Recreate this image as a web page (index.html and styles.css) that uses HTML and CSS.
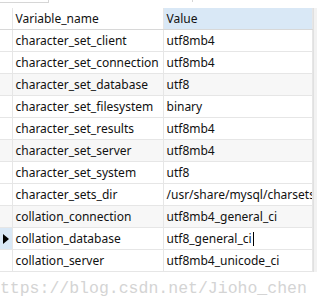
FILE: index.html
```html
<!DOCTYPE html>
<html lang="en">
<head>
  <meta charset="UTF-8">
  <title>Variables</title>
  <link rel="stylesheet" href="styles.css">
</head>
<body>
  <div class="tabs">
    <span class="tab"></span>
    <span class="tab tab-wide"></span>
  </div>
  <div class="grid-wrap">
    <table class="grid">
      <colgroup>
        <col class="col-mark">
        <col class="col-name">
        <col>
      </colgroup>
      <thead>
        <tr>
          <th class="mark"></th>
          <th>Variable_name</th>
          <th class="selected">Value</th>
        </tr>
      </thead>
      <tbody>
        <tr><td class="mark"></td><td>character_set_client</td><td>utf8mb4</td></tr>
        <tr><td class="mark"></td><td>character_set_connection</td><td>utf8mb4</td></tr>
        <tr class="shade"><td class="mark"></td><td>character_set_database</td><td>utf8</td></tr>
        <tr><td class="mark"></td><td>character_set_filesystem</td><td>binary</td></tr>
        <tr><td class="mark"></td><td>character_set_results</td><td>utf8mb4</td></tr>
        <tr class="shade"><td class="mark"></td><td>character_set_server</td><td>utf8mb4</td></tr>
        <tr><td class="mark"></td><td>character_set_system</td><td>utf8</td></tr>
        <tr><td class="mark"></td><td>character_sets_dir</td><td>/usr/share/mysql/charsets/</td></tr>
        <tr class="shade"><td class="mark"></td><td>collation_connection</td><td>utf8mb4_general_ci</td></tr>
        <tr class="current"><td class="mark"><span class="arrow"></span></td><td>collation_database</td><td>utf8_general_ci<span class="caret"></span></td></tr>
        <tr><td class="mark"></td><td>collation_server</td><td>utf8mb4_unicode_ci</td></tr>
      </tbody>
    </table>
    <div class="scrollbar"></div>
  </div>
  <div class="watermark">https://blog.csdn.net/Jioho_chen</div>
</body>
</html>
```

FILE: styles.css
```css
body {
  margin: 0;
  background-color: #fff;
  font-family: 'Noto Sans', sans-serif;
  color: #111;
  overflow: hidden;
}
.tabs {
  height: 8px;
  display: flex;
}
.tab {
  width: 48px;
  height: 2px;
  border-bottom: 1px solid #d6d6d6;
  border-right: 1px solid #d6d6d6;
}
.tab-wide {
  width: 143px;
  border-bottom: none;
}
.grid-wrap {
  display: flex;
  width: 317px;
}
.grid {
  border-collapse: collapse;
  table-layout: fixed;
  width: 313px;
  font-size: 12px;
}
.col-mark {
  width: 12px;
}
.col-name {
  width: 151px;
}
.grid th,
.grid td {
  height: 21px;
  padding: 0 0 0 3px;
  border-right: 1px solid #e6e6e6;
  border-bottom: 1px solid #e6e6e6;
  text-align: left;
  font-weight: normal;
  white-space: nowrap;
  overflow: hidden;
  line-height: 21px;
}
.grid th {
  border-bottom-color: #d8d8d8;
}
.grid .mark {
  padding: 0;
  position: relative;
}
.grid th.selected {
  background-color: #d9e8f6;
}
.shade td {
  background-color: #f7f7f7;
}
.current .mark {
  background-color: #d9e8f6;
}
.arrow {
  position: absolute;
  left: 3px;
  top: 6px;
  border-left: 6px solid #000;
  border-top: 5px solid transparent;
  border-bottom: 5px solid transparent;
}
.caret {
  display: inline-block;
  width: 1px;
  height: 14px;
  margin-left: 1px;
  background-color: #000;
  vertical-align: -3px;
}
.scrollbar {
  width: 3px;
  height: 264px;
  background-color: #f2f2f2;
  border-left: 1px solid #e0e0e0;
}
.watermark {
  margin: 7px 0 0 -10px;
  font-family: 'Liberation Mono', monospace;
  font-size: 16.5px;
  color: #d4d4d4;
  white-space: nowrap;
}
```
